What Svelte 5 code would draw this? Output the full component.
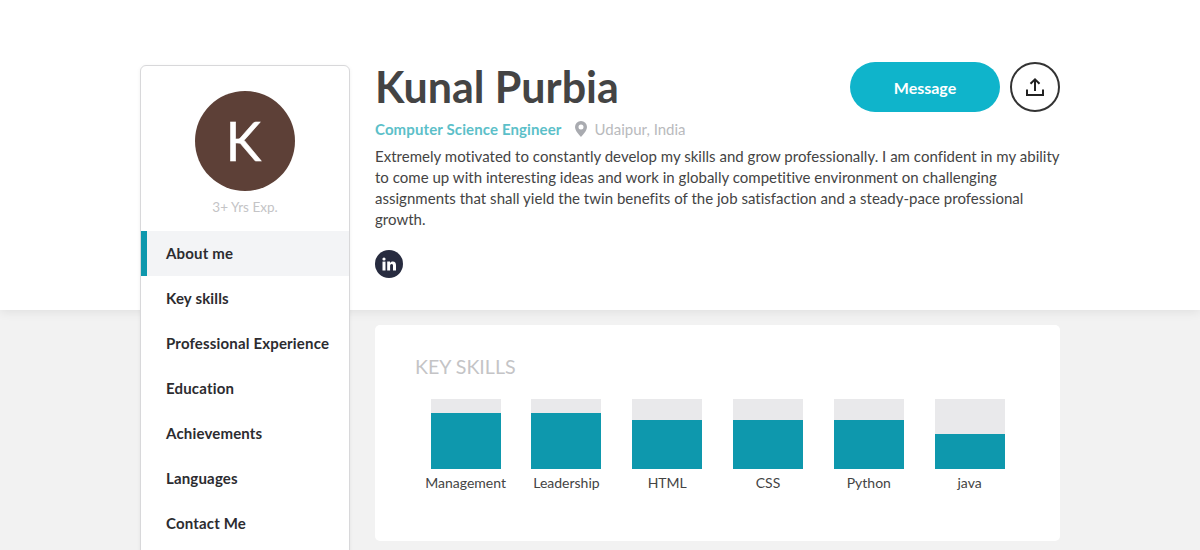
<script>
	const nav_items = [
		'About me',
		'Key skills',
		'Professional Experience',
		'Education',
		'Achievements',
		'Languages',
		'Contact Me'
	];

	const skills = [
		{ name: 'Management', level: 80 },
		{ name: 'Leadership', level: 80 },
		{ name: 'HTML', level: 70 },
		{ name: 'CSS', level: 70 },
		{ name: 'Python', level: 70 },
		{ name: 'java', level: 50 }
	];
</script>

<div class="page">
	<div class="top_band"></div>
	<div class="wrap">
		<aside class="side">
			<div class="avatar">K</div>
			<p class="exp">3+ Yrs Exp.</p>
			<nav class="side_nav">
				{#each nav_items as item, i}
					<a class="nav_link" class:active={i === 0} href="#top">{item}</a>
				{/each}
			</nav>
		</aside>

		<main class="main">
			<header class="intro">
				<div class="actions">
					<button type="button" class="msg_btn">Message</button>
					<button type="button" class="share_btn" aria-label="Share">
						<svg width="20" height="20" viewBox="0 0 20 20" fill="none" stroke="#222" stroke-width="2">
							<path d="M10 14V2.5M5.5 6.8 10 2.3l4.5 4.5" />
							<path d="M2 12.500V18h16v-5.500" />
						</svg>
					</button>
				</div>
				<h1 class="name">Kunal Purbia</h1>
				<div class="meta">
					<span class="role">Computer Science Engineer</span>
					<svg class="pin" width="12" height="16" viewBox="0 0 12 16">
						<path
							fill="#a9abb0"
							fill-rule="evenodd"
							d="M6 0a6 6 0 0 1 6 6c0 3.600-4 7.800-6 10C4 13.800 0 9.600 0 6a6 6 0 0 1 6-6Zm0 3.500a2.500 2.500 0 1 0 0 5 2.500 2.500 0 0 0 0-5Z"
						/>
					</svg>
					<span class="place">Udaipur, India</span>
				</div>
				<p class="bio">
					Extremely motivated to constantly develop my skills and grow professionally. I am confident in my ability to come up with interesting ideas and work in globally competitive environment on challenging assignments that shall yield the twin benefits of the job satisfaction and a steady-pace professional growth.
				</p>
				<a class="linkedin" href="#top" aria-label="LinkedIn">
					<svg width="14" height="14" viewBox="0 0 14 14" fill="#fff">
						<circle cx="2" cy="2" r="1.600" />
						<rect x="0.500" y="4.600" width="3" height="8.900" />
						<path d="M5.200 4.600H8v1.300c.5-.9 1.500-1.500 2.800-1.500 2.300 0 3.200 1.400 3.200 3.800v5.300h-3V8.800c0-1.200-.3-1.900-1.300-1.900-1.100 0-1.600.8-1.600 1.900v4.700H5.200Z" />
					</svg>
				</a>
			</header>

			<section class="card">
				<h2 class="card_title">KEY SKILLS</h2>
				<div class="skill_grid">
					{#each skills as skill (skill.name)}
						<div class="skill">
							<div class="bar">
								<div class="bar_fill" style="height: {skill.level}%"></div>
							</div>
							<span class="skill_name">{skill.name}</span>
						</div>
					{/each}
				</div>
			</section>
		</main>
	</div>
</div>

<style>
	:global(body) {
		background: #f2f2f2;
		font-family: Lato, 'Liberation Sans', sans-serif;
		color: #444;
		overflow: hidden;
	}

	.page {
		position: relative;
		height: 550px;
		overflow: hidden;
	}

	.top_band {
		position: absolute;
		top: 0;
		left: 0;
		right: 0;
		height: 310px;
		background: #fff;
		box-shadow: 0 2px 10px rgba(0, 0, 0, 0.08);
	}

	.wrap {
		position: relative;
		display: flex;
		gap: 25px;
		width: 920px;
		margin: 0 auto;
		padding-top: 65px;
	}

	.side {
		flex: 0 0 210px;
		box-sizing: border-box;
		height: 600px;
		padding-top: 25px;
		background: #fff;
		border: 1px solid #d8d8da;
		border-radius: 6px;
		box-shadow: 0 1px 4px rgba(0, 0, 0, 0.06);
	}

	.avatar {
		display: flex;
		align-items: center;
		justify-content: center;
		box-sizing: border-box;
		width: 100px;
		height: 100px;
		margin: 0 auto;
		padding-right: 3px;
		border-radius: 50%;
		background: #5d4037;
		color: #fff;
		font-size: 54px;
		line-height: 96px;
		-webkit-text-stroke: 0.4px #fff;
	}

	.exp {
		margin: 8px 0 15px;
		text-align: center;
		font-size: 13.500px;
		line-height: 17px;
		color: #c4c4c6;
	}

	.side_nav {
		display: flex;
		flex-direction: column;
	}

	.nav_link {
		padding: 0 0 0 25px;
		font-size: 15px;
		font-weight: 700;
		letter-spacing: 0.17px;
		line-height: 45px;
		color: #2c2c30;
		text-decoration: none;
		white-space: nowrap;
	}

	.nav_link.active {
		padding-left: 19px;
		border-left: 6px solid #0e98ad;
		background: #f3f4f6;
	}

	.main {
		flex: 0 0 685px;
		margin-top: -65px;
	}

	.intro {
		height: 310px;
		box-sizing: border-box;
		padding-top: 61px;
	}

	.actions {
		float: right;
		display: flex;
		gap: 10px;
		margin-top: 1px;
	}

	.msg_btn {
		width: 150px;
		height: 50px;
		border: 0;
		border-radius: 25px;
		background: #0fb4cb;
		color: #fff;
		font: 700 16px Lato, sans-serif;
	}

	.share_btn {
		display: flex;
		align-items: center;
		justify-content: center;
		width: 50px;
		height: 50px;
		padding: 0;
		border: 2px solid #333;
		border-radius: 50%;
		background: #fff;
	}

	.name {
		margin: 0;
		font-size: 43px;
		font-weight: 700;
		line-height: 52px;
		color: #444;
	}

	.meta {
		display: flex;
		align-items: center;
		margin-top: 6px;
		line-height: 20px;
	}

	.role {
		font-size: 15px;
		font-weight: 700;
		letter-spacing: 0.12px;
		color: #5cbfc9;
	}

	.pin {
		margin: 0 8px 0 13px;
	}

	.place {
		font-size: 15px;
		color: #b9babd;
	}

	.bio {
		margin: 7px 0 0;
		font-size: 15px;
		letter-spacing: 0.02px;
		line-height: 21px;
		color: #444;
	}

	.linkedin {
		display: flex;
		align-items: center;
		justify-content: center;
		width: 28px;
		height: 28px;
		margin-top: 20px;
		border-radius: 50%;
		background: #272b3f;
	}

	.card {
		box-sizing: border-box;
		height: 216px;
		margin-top: 15px;
		padding: 29px 40px;
		background: #fff;
		border-radius: 5px;
	}

	.card_title {
		margin: 0;
		font-size: 19.600px;
		font-weight: 400;
		line-height: 26px;
		color: #c4c4c6;
	}

	.skill_grid {
		display: grid;
		grid-template-columns: repeat(6, 1fr);
		margin-top: 19px;
		padding-left: 0.250px;
	}

	.skill {
		display: flex;
		flex-direction: column;
		align-items: center;
	}

	.bar {
		display: flex;
		align-items: flex-end;
		width: 70px;
		height: 70px;
		background: #e9e9eb;
	}

	.bar_fill {
		width: 100%;
		background: #0e98ad;
	}

	.skill_name {
		margin-top: 5px;
		font-size: 14px;
		line-height: 18px;
		color: #444;
	}
</style>
